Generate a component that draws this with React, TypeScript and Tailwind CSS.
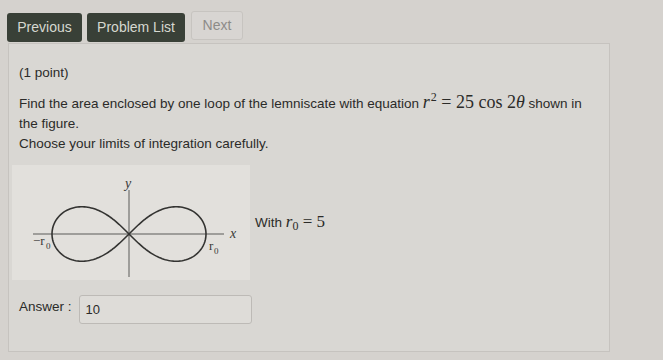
import React from "react";

function Lemniscate() {
  const cx = 117;
  const cy = 69;
  const a = 77;
  const pts: string[] = [];
  for (let i = 0; i <= 240; i++) {
    const t = (i / 240) * Math.PI * 2;
    const s = Math.sin(t);
    const d = 1 + s * s;
    const x = cx + (a * Math.cos(t)) / d;
    const y = cy - (a * s * Math.cos(t)) / d;
    pts.push(`${x.toFixed(2)},${y.toFixed(2)}`);
  }
  return (
    <svg width="238" height="115" viewBox="0 0 238 115" className="block">
      <line x1="21" y1="69" x2="212" y2="69" stroke="#5a5a58" strokeWidth="1" />
      <line x1={cx} y1="25" x2={cx} y2="112" stroke="#5a5a58" strokeWidth="1" />
      <polyline points={pts.join(" ")} fill="none" stroke="#333331" strokeWidth="1.6" />
      <text x="113" y="23" fontFamily="'Liberation Serif', serif" fontStyle="italic" fontSize="14" fill="#3a3a38">y</text>
      <text x="218" y="73" fontFamily="'Liberation Serif', serif" fontStyle="italic" fontSize="14" fill="#3a3a38">x</text>
      <text x="21" y="80" fontFamily="'Liberation Serif', serif" fontSize="13" fill="#3a3a38">−r</text>
      <text x="34" y="84" fontFamily="'Liberation Serif', serif" fontSize="9" fill="#3a3a38">0</text>
      <text x="197" y="85" fontFamily="'Liberation Serif', serif" fontSize="13" fill="#3a3a38">r</text>
      <text x="202" y="89" fontFamily="'Liberation Serif', serif" fontSize="9" fill="#3a3a38">0</text>
    </svg>
  );
}

export default function App() {
  return (
    <div className="w-[663px] h-[360px] overflow-hidden bg-[#d5d2ce] pl-[7px] pt-[13px] text-[#2b2b29] font-['Liberation_Sans',Arial,sans-serif] text-[13.5px]">
      {/* Nav buttons */}
      <div className="flex items-start gap-[5px]">
        <button className="w-[75px] h-[29px] rounded-[3px] bg-[#394037] text-[#d6d8d0] text-[14px]">Previous</button>
        <button className="w-[98px] h-[29px] rounded-[3px] bg-[#394037] text-[#d6d8d0] text-[14px]">Problem List</button>
        <button className="w-[52px] h-[29px] -mt-[2px] ml-[1px] rounded-[3px] bg-[#d8d5d2] border border-[#c7c4c0] text-[#8d8b88] text-[14px]">Next</button>
      </div>

      {/* Problem panel */}
      <div className="ml-[1px] mt-[1px] w-[602px] h-[309px] bg-[#d9d7d3] border border-[#c6c3bf] pt-[19px] px-[3px]">
        <div className="pl-[7px] leading-[20px]">(1 point)</div>
        <div className="pl-[7px] pr-[10px] mt-[10px] leading-[20px]">
          <p>
            Find the area enclosed by one loop of the lemniscate with equation{" "}
            <span className="font-['Liberation_Serif',serif] text-[18px] leading-none">
              <i>r</i>
              <span className="relative -top-[7px] text-[12px] ml-[1px]">2</span> = 25 cos 2<i>θ</i>
            </span>{" "}
            shown in the figure.
          </p>
          <p>Choose your limits of integration carefully.</p>
        </div>

        <div className="mt-[11px] flex items-start">
          <div className="bg-[#e2e0dc]">
            <Lemniscate />
          </div>
          <div className="ml-[5px] mt-[48px] leading-[20px]">
            With{" "}
            <span className="font-['Liberation_Serif',serif] text-[17px] leading-none">
              <i>r</i>
              <span className="relative top-[3px] text-[12px]">0</span> = 5
            </span>
          </div>
        </div>

        <div className="mt-[15px] pl-[7px] flex items-center">
          <span className="relative -top-[2px]">Answer :</span>
          <div className="ml-[7px] w-[173px] h-[29px] rounded-[3px] bg-[#dedcd8] border border-[#bdbab6] pl-[6px] flex items-center text-[13px]">
            10
          </div>
        </div>
      </div>
    </div>
  );
}
